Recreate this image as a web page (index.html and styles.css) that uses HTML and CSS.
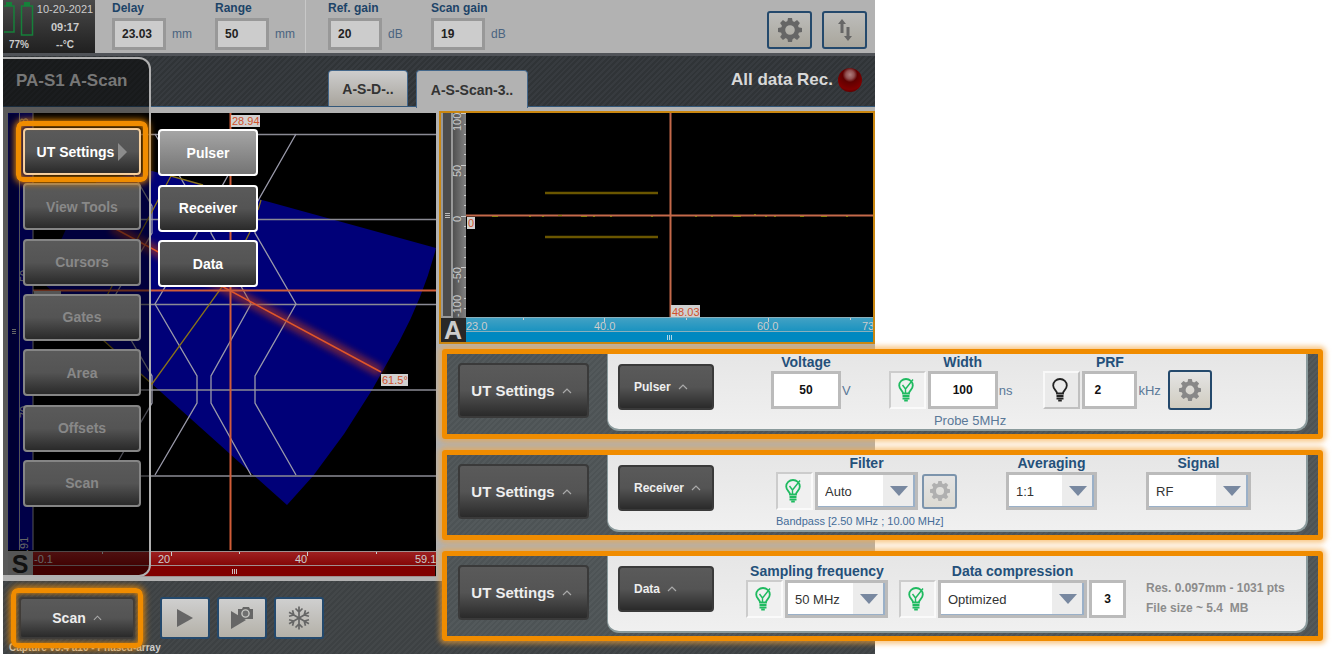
FILE: index.html
```html
<!DOCTYPE html>
<html lang="en">

<head>
    <meta charset="UTF-8">
    <meta name="viewport" content="width=device-width, initial-scale=1">
    <title>Capture - UT Settings</title>
    <link rel="stylesheet" href="styles.css">
</head>

<body>
    <!-- shared icons -->
    <svg class="sprite" aria-hidden="true">
        <symbol id="gear" viewBox="0 0 24 24">
            <g fill="currentColor">
                <path d="M10 0h4l1 5h-6z" />
                <path d="M10 0h4l1 5h-6z" transform="rotate(45 12 12)" />
                <path d="M10 0h4l1 5h-6z" transform="rotate(90 12 12)" />
                <path d="M10 0h4l1 5h-6z" transform="rotate(135 12 12)" />
                <path d="M10 0h4l1 5h-6z" transform="rotate(180 12 12)" />
                <path d="M10 0h4l1 5h-6z" transform="rotate(225 12 12)" />
                <path d="M10 0h4l1 5h-6z" transform="rotate(270 12 12)" />
                <path d="M10 0h4l1 5h-6z" transform="rotate(315 12 12)" />
            </g>
            <circle cx="12" cy="12" r="7" fill="none" stroke="currentColor" stroke-width="4.4" />
        </symbol>
        <symbol id="bulb" viewBox="0 0 16 24">
            <path d="M5 15.500C5 12.500 1.200 11.500 1.200 7.500a6.800 6.500 0 0 1 13.600 0C14.800 11.500 11 12.500 11 15.500z" fill="none" stroke="currentColor" stroke-width="1.800" />
            <path d="M4.500 18h7M4.500 20.500h7M6.200 22.700h3.600" stroke="currentColor" stroke-width="1.800" />
        </symbol>
        <symbol id="bulb-on" viewBox="0 0 16 24">
            <use href="#bulb" width="16" height="24" />
            <path d="M4.500 7l3 4L15 1.500M7.500 11v4" fill="none" stroke="currentColor" stroke-width="1.400" />
        </symbol>
        <symbol id="chevron" viewBox="0 0 10 6">
            <path d="M1 5l4-4 4 4" fill="none" stroke="currentColor" stroke-width="1.200" />
        </symbol>
    </svg>

    <div class="page">
        <main class="device">
            <header class="topbar">
                <div class="status">
                    <svg class="batteries" viewBox="0 0 32 36" aria-hidden="true">
                        <g fill="none" stroke="#16803a" stroke-width="1.500">
                            <path d="M1 6h10v26h-10" />
                            <path d="M18.500 6h11v29h-11z" />
                        </g>
                        <path d="M3 2h6v4h-6zM21 2h6v4h-6z" fill="#16803a" />
                    </svg>
                    <span class="charge">77%</span>
                    <span class="date">10-20-2021</span>
                    <span class="clock">09:17</span>
                    <span class="temp">--°C</span>
                </div>
                <div class="param">
                    <label for="delay">Delay</label>
                    <input id="delay" type="text" value="23.03"><span>mm</span>
                </div>
                <div class="param">
                    <label for="range">Range</label>
                    <input id="range" type="text" value="50"><span>mm</span>
                </div>
                <div class="param divided">
                    <label for="refgain">Ref. gain</label>
                    <input id="refgain" type="text" value="20"><span>dB</span>
                </div>
                <div class="param">
                    <label for="scangain">Scan gain</label>
                    <input id="scangain" type="text" value="19"><span>dB</span>
                </div>
                <div class="topbuttons">
                    <button class="lightbtn" aria-label="Settings"><svg width="24" height="24"><use href="#gear" /></svg></button>
                    <button class="lightbtn" aria-label="Transfer">
                        <svg width="14" height="22" viewBox="0 0 14 22"><path d="M4 0l4 5H5.500v9h-3V5H0zM10 22l-4-5h2.500V8h3v9H14z" fill="currentColor" /></svg>
                    </button>
                </div>
            </header>

            <div class="tabstrip">
                <button class="tab">A-S-D-..</button>
                <button class="tab active">A-S-Scan-3..</button>
                <span class="record">All data Rec.</span>
                <span class="led"></span>
            </div>

            <section class="plots">
                <svg class="sscan" viewBox="8 113 428 464">
                    <defs>
                        <linearGradient id="redaxis" x1="0" y1="0" x2="0" y2="1">
                            <stop offset="0" stop-color="#a02222" />
                            <stop offset="1" stop-color="#850808" />
                        </linearGradient>
                        <filter id="soft" x="-10%" y="-10%" width="120%" height="120%"><feGaussianBlur stdDeviation="3" /></filter>
                    </defs>
                    <rect x="8" y="113" width="428" height="464" fill="#000" />
                    <path d="M436 248L262 200L152 171L98 180Q75 205 62 238Q45 262 40 280L105 341L152 384L287 505L313 476L344 434L372 390L400 340Q424 295 436 248z" fill="#000078" />
                    <g stroke="#8a8a94" stroke-width="1.500">
                        <path d="M33 134.500H436M33 219.500H436M33 304.500H436M33 390H436M33 476H436" />
                    </g>
                    <g fill="none" stroke="#9a9aaa" stroke-width="1.300">
                        <path d="M296 134L255 206V233L296 304L255 376V403L296 475" />
                        <path d="M251 134L211 206V233L251 304L211 376V403L251 475" />
                        <path d="M155 134L197 206V233L155 304L197 376V403L155 475" />
                        <path d="M110 134L152 206V233L110 304L152 376V403L110 475" />
                    </g>
                    <path d="M103 303L171 176L203 185M258 210L261 200M250 232L222 287L152 384L103 340" fill="none" stroke="#8a7318" stroke-width="1.300" />
                    <path d="M112 227L381 372" stroke="#c03c14" stroke-width="11" opacity=".55" filter="url(#soft)" />
                    <path d="M112 227L381 372" stroke="#e0562a" stroke-width="1.500" />
                    <path d="M230.500 113V550M33 290.500H436" stroke="#d05c38" stroke-width="2" />
                    <rect x="34" y="291" width="27" height="6" fill="#aaa" />
                    <g class="tag">
                        <rect x="231" y="115" width="29" height="12" />
                        <text x="232" y="125">28.94</text>
                        <rect x="381" y="374" width="27" height="12" />
                        <text x="382" y="384">61.5°</text>
                    </g>
                    <!-- vertical axis -->
                    <rect x="8" y="113" width="25" height="437" fill="#000090" />
                    <rect x="9" y="114" width="9" height="436" fill="#000068" />
                    <path d="M19.500 113V550M33 113V550" stroke="#aaa" />
                    <path d="M12 329.500h4M12 331.500h4M12 333.500h4" stroke="#ccc" />
                    <g class="axis">
                        <text transform="translate(28 127) rotate(-90)">.3</text>
                        <text transform="translate(28 282) rotate(-90)">50</text>
                        <text transform="translate(28 418) rotate(-90)">70</text>
                        <text transform="translate(28 552) rotate(-90)">.91</text>
                    </g>
                    <!-- horizontal axis -->
                    <rect x="33" y="551" width="403" height="14" fill="url(#redaxis)" />
                    <rect x="33" y="566" width="402" height="10" fill="#800000" />
                    <path d="M33 551.500H436M33 565.500H436M8 576.500H436" stroke="#a09090" />
                    <path d="M102.500 552v2M171.500 552v4M239.500 552v2M307.500 552v4M376.500 552v2" stroke="#ccc" />
                    <path d="M232.500 569v5M234.500 569v5M236.500 569v5" stroke="#d0c0c0" />
                    <g class="axis">
                        <text x="34" y="563">-0.1</text>
                        <text x="158" y="563">20</text>
                        <text x="295" y="563">40</text>
                        <text x="415" y="563">59.1</text>
                    </g>
                    <rect x="8" y="551" width="25" height="26" fill="#aaa" />
                    <text class="corner" x="20" y="573" fill="#222">S</text>
                </svg>

                <svg class="ascan" viewBox="439 111 436 233">
                    <defs>
                        <linearGradient id="blueaxis" x1="0" y1="0" x2="0" y2="1">
                            <stop offset="0" stop-color="#45a2c4" />
                            <stop offset="1" stop-color="#1792c0" />
                        </linearGradient>
                        <linearGradient id="greyaxis">
                            <stop offset="0" stop-color="#505050" />
                            <stop offset="1" stop-color="#808080" />
                        </linearGradient>
                    </defs>
                    <rect x="439" y="111" width="436" height="233" fill="#000" />
                    <rect x="440" y="113" width="13" height="205" fill="#999" />
                    <rect x="443" y="113" width="8" height="203" fill="#4c4c4c" />
                    <rect x="453" y="113" width="13" height="205" fill="url(#greyaxis)" />
                    <path d="M445 213.500h5M445 215.500h5M445 217.500h5" stroke="#bbb" />
                    <path d="M461 113.500h5M464 124.500h2M464 134.500h2M464 144.500h2M464 154.500h2M461 165.500h5M464 175.500h2M464 185.500h2M464 195.500h2M464 205.500h2M461 216.500h5M464 226.500h2M464 236.500h2M464 247.500h2M464 257.500h2M461 267.500h5M464 277.500h2M464 287.500h2M464 298.500h2M464 308.500h2" stroke="#ccc" />
                    <g class="axis">
                        <text transform="translate(461 131) rotate(-90)">100</text>
                        <text transform="translate(461 177) rotate(-90)">50</text>
                        <text transform="translate(461 222) rotate(-90)">0</text>
                        <text transform="translate(461 283) rotate(-90)">-50</text>
                        <text transform="translate(461 317) rotate(-90)">-100</text>
                    </g>
                    <path d="M545 193H658M545 237H658" stroke="#6a5600" stroke-width="2.600" />
                    <path d="M466 215.500H874M670.500 113V317" stroke="#c4694a" stroke-width="2" />
                    <path d="M492 216.500h6M529 216.500h2M542 216.500h2M558 215.500h4M581 216.500h6M593 216.500h2M610 216.500h2M651 216.500h2M695 216.500h2M711 216.500h2M733 216.500h8M754 214.500h2M765 216.500h2M774 216.500h2M800 216.500h4M821 216.500h6M846 216.500h2" stroke="#8a8010" />
                    <g class="tag">
                        <rect x="467" y="217" width="8" height="12" />
                        <text x="468" y="227">0</text>
                        <rect x="671" y="305" width="29" height="12" />
                        <text x="672" y="316">48.03</text>
                    </g>
                    <rect x="466" y="317" width="408" height="15" fill="url(#blueaxis)" />
                    <rect x="466" y="332" width="408" height="11" fill="#0088c0" />
                    <path d="M466 317.500H874M466 331.500H874M466 342.500H874" stroke="#8ab0bc" />
                    <path d="M523.500 318v2M604.500 318v4M686.500 318v2M768.500 318v4M850.500 318v2" stroke="#ccc" />
                    <path d="M667.500 335v5M669.500 335v5M671.500 335v5" stroke="#b0d8e8" />
                    <g class="axis">
                        <text x="466" y="330">23.0</text>
                        <text x="594" y="330">40.0</text>
                        <text x="757" y="330">60.0</text>
                        <text x="862" y="330">73</text>
                    </g>
                    <rect x="440" y="318" width="26" height="25" fill="#282828" />
                    <text class="corner" x="453" y="339" fill="#ccc">A</text>
                    <rect x="440" y="112" width="434" height="231" fill="none" stroke="#c98610" stroke-width="2" />
                </svg>
            </section>

            <footer class="footer">
                <div class="footrow">
                    <button class="darkbtn scan highlight">Scan <svg class="chev" width="9" height="6"><use href="#chevron" /></svg></button>
                    <button class="lightbtn" aria-label="Play">
                        <svg width="18" height="20" viewBox="0 0 18 20"><path d="M1 1l16 9-16 9z" fill="currentColor" /></svg>
                    </button>
                    <button class="lightbtn" aria-label="Record with snapshot">
                        <svg width="24" height="24" viewBox="0 0 24 24">
                            <path d="M1 5l15 9L1 23z" fill="currentColor" />
                            <path d="M8 3h4l1-2h6l1 2h3v10H8z" fill="currentColor" />
                            <circle cx="15.500" cy="7.500" r="3.600" fill="#707070" stroke="#c8c8c4" stroke-width="1.400" />
                        </svg>
                    </button>
                    <button class="lightbtn" aria-label="Freeze">
                        <svg width="24" height="24" viewBox="0 0 24 24">
                            <g fill="none" stroke="currentColor" stroke-width="1.700">
                                <path id="arm" d="M12 12V0.500M8.500 2.500L12 6l3.500-3.500" />
                                <use href="#arm" transform="rotate(60 12 12)" />
                                <use href="#arm" transform="rotate(120 12 12)" />
                                <use href="#arm" transform="rotate(180 12 12)" />
                                <use href="#arm" transform="rotate(240 12 12)" />
                                <use href="#arm" transform="rotate(300 12 12)" />
                            </g>
                        </svg>
                    </button>
                    <span class="marker"></span>
                </div>
                <p class="version">Capture v3.4 a10 - Phased-array</p>
            </footer>

            <!-- side menu lies over the S-scan -->
            <nav class="sidemenu">
                <h1>PA-S1 A-Scan</h1>
                <div class="menulist">
                    <button class="darkbtn selected highlight">UT Settings<i class="arrow"></i></button>
                    <button class="darkbtn off">View Tools</button>
                    <button class="darkbtn off">Cursors</button>
                    <button class="darkbtn off">Gates</button>
                    <button class="darkbtn off">Area</button>
                    <button class="darkbtn off">Offsets</button>
                    <button class="darkbtn off">Scan</button>
                </div>
            </nav>
            <nav class="submenu">
                <button class="darkbtn current">Pulser</button>
                <button class="darkbtn">Receiver</button>
                <button class="darkbtn">Data</button>
            </nav>
        </main>

        <div class="callouts">
            <section class="callout">
                <button class="darkbtn utbtn">UT Settings <svg class="chev" width="10" height="6"><use href="#chevron" /></svg></button>
                <div class="panel">
                    <button class="darkbtn subbtn">Pulser <svg class="chev" width="10" height="6"><use href="#chevron" /></svg></button>
                    <div class="field voltage">
                        <label for="voltage">Voltage</label>
                        <input id="voltage" class="wide" type="text" value="50">
                        <span class="unit">V</span>
                    </div>
                    <div class="field width">
                        <button class="toggle on" aria-label="Auto width"><svg width="16" height="24"><use href="#bulb-on" /></svg></button>
                        <label for="width">Width</label>
                        <input id="width" class="wide" type="text" value="100">
                        <span class="unit">ns</span>
                        <span class="note">Probe 5MHz</span>
                    </div>
                    <div class="field prf">
                        <button class="toggle" aria-label="Auto PRF"><svg width="16" height="24"><use href="#bulb" /></svg></button>
                        <label for="prf">PRF</label>
                        <input id="prf" type="text" value="2">
                        <span class="unit">kHz</span>
                        <button class="lightbtn gearbtn" aria-label="PRF settings"><svg width="22" height="22"><use href="#gear" /></svg></button>
                    </div>
                </div>
            </section>

            <section class="callout">
                <button class="darkbtn utbtn">UT Settings <svg class="chev" width="10" height="6"><use href="#chevron" /></svg></button>
                <div class="panel">
                    <button class="darkbtn subbtn">Receiver <svg class="chev" width="10" height="6"><use href="#chevron" /></svg></button>
                    <div class="field filter">
                        <button class="toggle on" aria-label="Auto filter"><svg width="16" height="24"><use href="#bulb-on" /></svg></button>
                        <label for="filter">Filter</label>
                        <div class="select">
                            <select id="filter"><option>Auto</option></select>
                        </div>
                        <button class="lightbtn gearbtn faded" aria-label="Filter settings"><svg width="20" height="20"><use href="#gear" /></svg></button>
                        <span class="note small">Bandpass [2.50 MHz ; 10.00 MHz]</span>
                    </div>
                    <div class="field averaging">
                        <label for="averaging">Averaging</label>
                        <div class="select">
                            <select id="averaging"><option>1:1</option></select>
                        </div>
                    </div>
                    <div class="field signal">
                        <label for="signal">Signal</label>
                        <div class="select">
                            <select id="signal"><option>RF</option></select>
                        </div>
                    </div>
                </div>
            </section>

            <section class="callout">
                <button class="darkbtn utbtn">UT Settings <svg class="chev" width="10" height="6"><use href="#chevron" /></svg></button>
                <div class="panel low">
                    <button class="darkbtn subbtn">Data <svg class="chev" width="10" height="6"><use href="#chevron" /></svg></button>
                    <div class="field sampling">
                        <label for="sampling">Sampling frequency</label>
                        <button class="toggle on" aria-label="Auto sampling"><svg width="16" height="24"><use href="#bulb-on" /></svg></button>
                        <div class="select">
                            <select id="sampling"><option>50 MHz</option></select>
                        </div>
                    </div>
                    <div class="field compression">
                        <button class="toggle on" aria-label="Auto compression"><svg width="16" height="24"><use href="#bulb-on" /></svg></button>
                        <label for="compression">Data compression</label>
                        <div class="select">
                            <select id="compression"><option>Optimized</option></select>
                        </div>
                        <input class="tiny" type="text" value="3" aria-label="Compression factor">
                    </div>
                    <p class="info">Res. 0.097mm - 1031 pts<br>File size ~ 5.4&nbsp; MB</p>
                </div>
            </section>
        </div>
    </div>
</body>

</html>
```

FILE: styles.css
```css
* {
    box-sizing: border-box;
}

body {
    margin: 0;
    background-color: #fff;
    font-family: "Liberation Sans", Arial, sans-serif;
}

button,
input,
select {
    font-family: inherit;
    margin: 0;
    padding: 0;
}

.sprite {
    position: absolute;
    width: 0;
    height: 0;
}

.page {
    position: relative;
    display: grid;
    grid-template-columns: 872fr 458fr;
    padding-left: 3px;
}

.device {
    position: relative;
    background-color: #b2b2b2;
}

/* top bar */

.topbar {
    display: flex;
    height: 56px;
    border-bottom: 3px solid #505358;
}

.status {
    display: grid;
    grid-template-columns: 32px 60px;
    grid-template-rows: 18px 18px 17px;
    width: 92px;
    margin-right: 17px;
    background: linear-gradient(#4a4a4a, #202020);
    color: #ccc;
    font-size: 11px;
    text-align: center;
    align-items: center;
}

.batteries {
    grid-row: 1 / 3;
    width: 32px;
    height: 36px;
}

.charge {
    grid-row: 3;
    grid-column: 1;
    font-size: 10px;
    font-weight: bold;
}

.clock,
.temp {
    font-weight: bold;
}

.temp {
    font-size: 10px;
}

.date,
.clock,
.temp {
    grid-column: 2;
}

.param {
    display: grid;
    grid-template-columns: 54px auto;
    grid-template-rows: 16px 32px;
    row-gap: 2px;
    column-gap: 6px;
    align-items: center;
    align-content: start;
    width: 83px;
    margin-right: 20px;
    color: #4a6480;
    font-size: 12px;
}

.param:nth-child(3) {
    margin-right: 7px;
}

.param.divided {
    width: 106px;
    padding-left: 22px;
    height: 53px;
    border-left: 1px solid #c8c8c8;
}

.param label {
    grid-column: 1 / 3;
    font-weight: bold;
    color: #1d4468;
}

.param input {
    width: 54px;
    height: 32px;
    padding-left: 7px;
    border: 3px solid #989898;
    background-color: #ccc;
    font-size: 12px;
    font-weight: bold;
    color: #222;
}

.topbuttons {
    display: flex;
    gap: 10px;
    margin: 11px 8px 0 auto;
}

.lightbtn {
    display: flex;
    align-items: center;
    justify-content: center;
    width: 45px;
    height: 38px;
    border: 2px solid #24496c;
    border-radius: 3px;
    background: linear-gradient(#bdbdbb, #a9a69c);
    color: #666;
}

/* tabs */

.tabstrip {
    display: flex;
    align-items: flex-start;
    height: 51px;
    padding: 14px 13px 0 325px;
    background: repeating-linear-gradient(135deg, #303437 0 2px, #373b3f 2px 4px);
    border-bottom: 1px solid #34587a;
}

.tab {
    width: 80px;
    height: 36px;
    margin-right: 8px;
    border: 1px solid #44678a;
    border-bottom: 0;
    border-radius: 4px 4px 0 0;
    background: linear-gradient(#cdcdcd, #a8a49c);
    font-size: 14px;
    font-weight: bold;
    color: #333;
}

.tab.active {
    width: 112px;
    height: 38px;
    background: #b2b2b2;
}

.record {
    margin-left: auto;
    line-height: 20px;
    font-size: 17px;
    font-weight: bold;
    color: #d8d8d8;
}

.led {
    width: 24px;
    height: 24px;
    margin: -2px 0 0 5px;
    border-radius: 50%;
    background: radial-gradient(circle at 50% 28%, #b08080 0, #905050 20%, #600000 35%, #800000 70%, #300000 100%);
}

/* plots */

.plots {
    display: grid;
    grid-template-columns: 428fr 436fr;
    gap: 3px;
    align-items: start;
    padding: 4px 0 4px 5px;
}

.sscan,
.ascan {
    display: block;
    width: 100%;
}

.sscan {
    margin-top: 2px;
}

.tag rect {
    fill: #d0d0d0;
}

.tag text {
    fill: #d0522c;
    font-size: 11px;
}

.axis text {
    fill: #ccc;
    font-size: 11px;
}

.corner {
    font-size: 25px;
    font-weight: bold;
    text-anchor: middle;
}

/* footer */

.footer {
    height: 73px;
    padding: 16px 0 0 16px;
    background: repeating-linear-gradient(135deg, #3d4143 0 2px, #434749 2px 4px);
}

.footrow {
    display: flex;
    gap: 7px;
    height: 42px;
}

.footer .lightbtn {
    width: 50px;
    height: 42px;
    background: linear-gradient(#cfcfcf, #b4b1a8);
}

.scan {
    z-index: 1;
    width: 116px;
    height: 42px;
    margin-right: 18px;
}

.marker {
    width: 83px;
    height: 2px;
    margin: 42px 0 0 159px;
    background-color: #8a9a30;
}

.version {
    margin: 3px 0 0 -10px;
    line-height: 12px;
    font-size: 10px;
    font-weight: bold;
    color: #ccc;
}

/* dark buttons */

.darkbtn {
    display: flex;
    align-items: center;
    justify-content: center;
    border: 2px solid #3a3a3a;
    border-radius: 4px;
    background: linear-gradient(#5a5a5a 0, #545454 50%, #2a2a2a 100%);
    font-size: 14px;
    font-weight: bold;
    color: #eee;
}

.chev {
    margin-left: 7px;
    color: #aaa;
}

.highlight {
    position: relative;
}

.highlight::after {
    content: "";
    position: absolute;
    inset: -9px;
    border: 5px solid #f08c00;
    border-radius: 7px;
    box-shadow: 0 0 7px 1px #f08c00, inset 0 0 5px #f08c00;
}

.scan.highlight::after {
    inset: -11px -10px;
}

/* menus */

.sidemenu {
    position: absolute;
    top: 57px;
    left: 0;
    width: 148px;
    height: 520px;
    border: 2px solid #b0b0b0;
    border-left: 0;
    border-radius: 0 12px 12px 0;
    background-color: rgba(0, 0, 0, 0.5);
}

.sidemenu h1 {
    margin: 11px 0 0 13px;
    line-height: 22px;
    font-size: 17px;
    color: #777;
}

.menulist,
.submenu {
    display: flex;
    flex-direction: column;
    justify-content: space-between;
}

.menulist {
    width: 118px;
    height: 379px;
    margin: 36px 0 0 20px;
}

.menulist .darkbtn,
.submenu .darkbtn {
    height: 47px;
}

.menulist .darkbtn {
    border-color: #858585;
}

.menulist .off {
    color: #888;
}

.menulist .selected {
    border-color: #f8d8b0;
    color: #fff;
}

.arrow {
    margin-left: 4px;
    border: 9px solid transparent;
    border-left-color: #8c8c8c;
    border-right: 0;
}

.submenu {
    position: absolute;
    top: 129px;
    left: 155px;
    width: 100px;
    height: 158px;
}

.submenu .darkbtn {
    border-color: #fff;
    color: #fff;
}

.submenu .current {
    background: linear-gradient(#a5a5a5, #747474);
}

/* callouts over the device screen */

.callouts {
    position: absolute;
    z-index: 2;
    top: 349px;
    left: 442px;
    right: 10px;
    display: flex;
    flex-direction: column;
    gap: 11px;
}

.callout {
    display: flex;
    align-items: flex-start;
    height: 90px;
    border: 5px solid #f08c00;
    border-radius: 3px;
    background: repeating-linear-gradient(135deg, #4d5355 0 2px, #53595b 2px 4px);
    box-shadow: 0 0 5px 3px rgba(245, 165, 60, 0.6);
}

.utbtn {
    width: 131px;
    height: 55px;
    margin: 9px 18px 0 11px;
    padding-right: 4px;
    font-size: 15px;
}

.panel {
    flex: 1;
    display: flex;
    align-items: flex-start;
    height: 77px;
    margin-right: 10px;
    border: solid #8a9a9c;
    border-width: 0 2px 2px 1px;
    border-radius: 0 0 12px 12px;
    background: linear-gradient(#e6e6e6, #f0f0f0);
}

.subbtn {
    justify-content: flex-start;
    width: 96px;
    height: 46px;
    margin: 10px 0 0 10px;
    padding: 0 0 1px 14px;
    font-size: 12px;
}

.field {
    display: grid;
    grid-template-columns: auto auto auto auto;
    grid-template-rows: 16px 38px 20px;
    row-gap: 1px;
    align-items: center;
    flex: none;
}

.low .field {
    margin-top: 7px;
}

.field label {
    grid-row: 1;
    grid-column: 2;
    justify-self: center;
    font-size: 14px;
    font-weight: bold;
    color: #24507a;
    white-space: nowrap;
}

.field input,
.select {
    grid-row: 2;
    grid-column: 2;
    height: 38px;
    border: 3px solid #bbb;
    background-color: #fff;
}

.field input {
    width: 55px;
    padding-left: 9px;
    font-size: 12px;
    font-weight: bold;
    color: #111;
}

.field .wide {
    width: 70px;
    padding: 0;
    text-align: center;
}

.field .tiny {
    grid-column: 3;
    width: 37px;
    margin-left: 2px;
    padding: 0;
    text-align: center;
}

.toggle {
    grid-row: 2;
    grid-column: 1;
    display: flex;
    align-items: center;
    justify-content: center;
    width: 37px;
    height: 38px;
    margin-right: 2px;
    padding-right: 3px;
    border: 2px solid;
    border-color: #f8f8f8 #c0c0c0 #c0c0c0 #f8f8f8;
    background-color: #eaeaea;
    color: #222;
}

.toggle.on {
    border-color: #ccc #fafafa #fafafa #ccc;
    background-color: #f0f0f0;
    color: #1fba60;
}

.unit {
    grid-row: 2;
    grid-column: 3;
    margin-left: 1px;
    font-size: 13px;
    color: #5a7898;
}

.note {
    grid-row: 3;
    grid-column: 2 / 4;
    justify-self: center;
    font-size: 13px;
    color: #5a7898;
}

.note.small {
    grid-column: 1 / 5;
    justify-self: start;
    font-size: 11px;
    line-height: 14px;
    color: #446c98;
}

.gearbtn {
    grid-row: 2;
    grid-column: 4;
    width: 44px;
    height: 40px;
    margin-left: 7px;
    background: linear-gradient(#e4e4e4, #d0ccc0);
    color: #888;
}

.gearbtn.faded {
    width: 35px;
    height: 35px;
    margin-left: 4px;
    border-color: #7c94ac;
    background: linear-gradient(#e4e4e4, #dcdad2);
    color: #b0b0b0;
}

.select {
    position: relative;
    width: 103px;
}

.select select {
    appearance: none;
    width: 100%;
    height: 100%;
    padding-left: 7px;
    border: 0;
    border-radius: 0;
    background: linear-gradient(#ececec, #ececec) right / 32px 100% no-repeat;
    box-shadow: inset -2px -1px 0 #9ab0c8;
    font-size: 13px;
    color: #333;
}

.select::after {
    content: "";
    position: absolute;
    top: 11px;
    right: 7px;
    border: 9px solid transparent;
    border-top: 10px solid #7888a0;
    border-bottom: 0;
    pointer-events: none;
}

.voltage {
    margin-left: 57px;
    margin-right: 38px;
}

.prf {
    margin-left: 31px;
}

.filter {
    margin-left: 62px;
    margin-right: 49px;
}

.averaging .select {
    width: 91px;
}

.signal {
    margin-left: 49px;
}

.signal .select {
    width: 105px;
}

.sampling {
    margin-left: 32px;
}

.sampling label {
    grid-column: 1 / 5;
}

.compression {
    margin-left: 11px;
}

.compression .select {
    width: 149px;
}

.info {
    margin: 22px 0 0 20px;
    font-size: 12px;
    line-height: 20px;
    font-weight: bold;
    color: #8c8c8c;
    white-space: nowrap;
}
```
